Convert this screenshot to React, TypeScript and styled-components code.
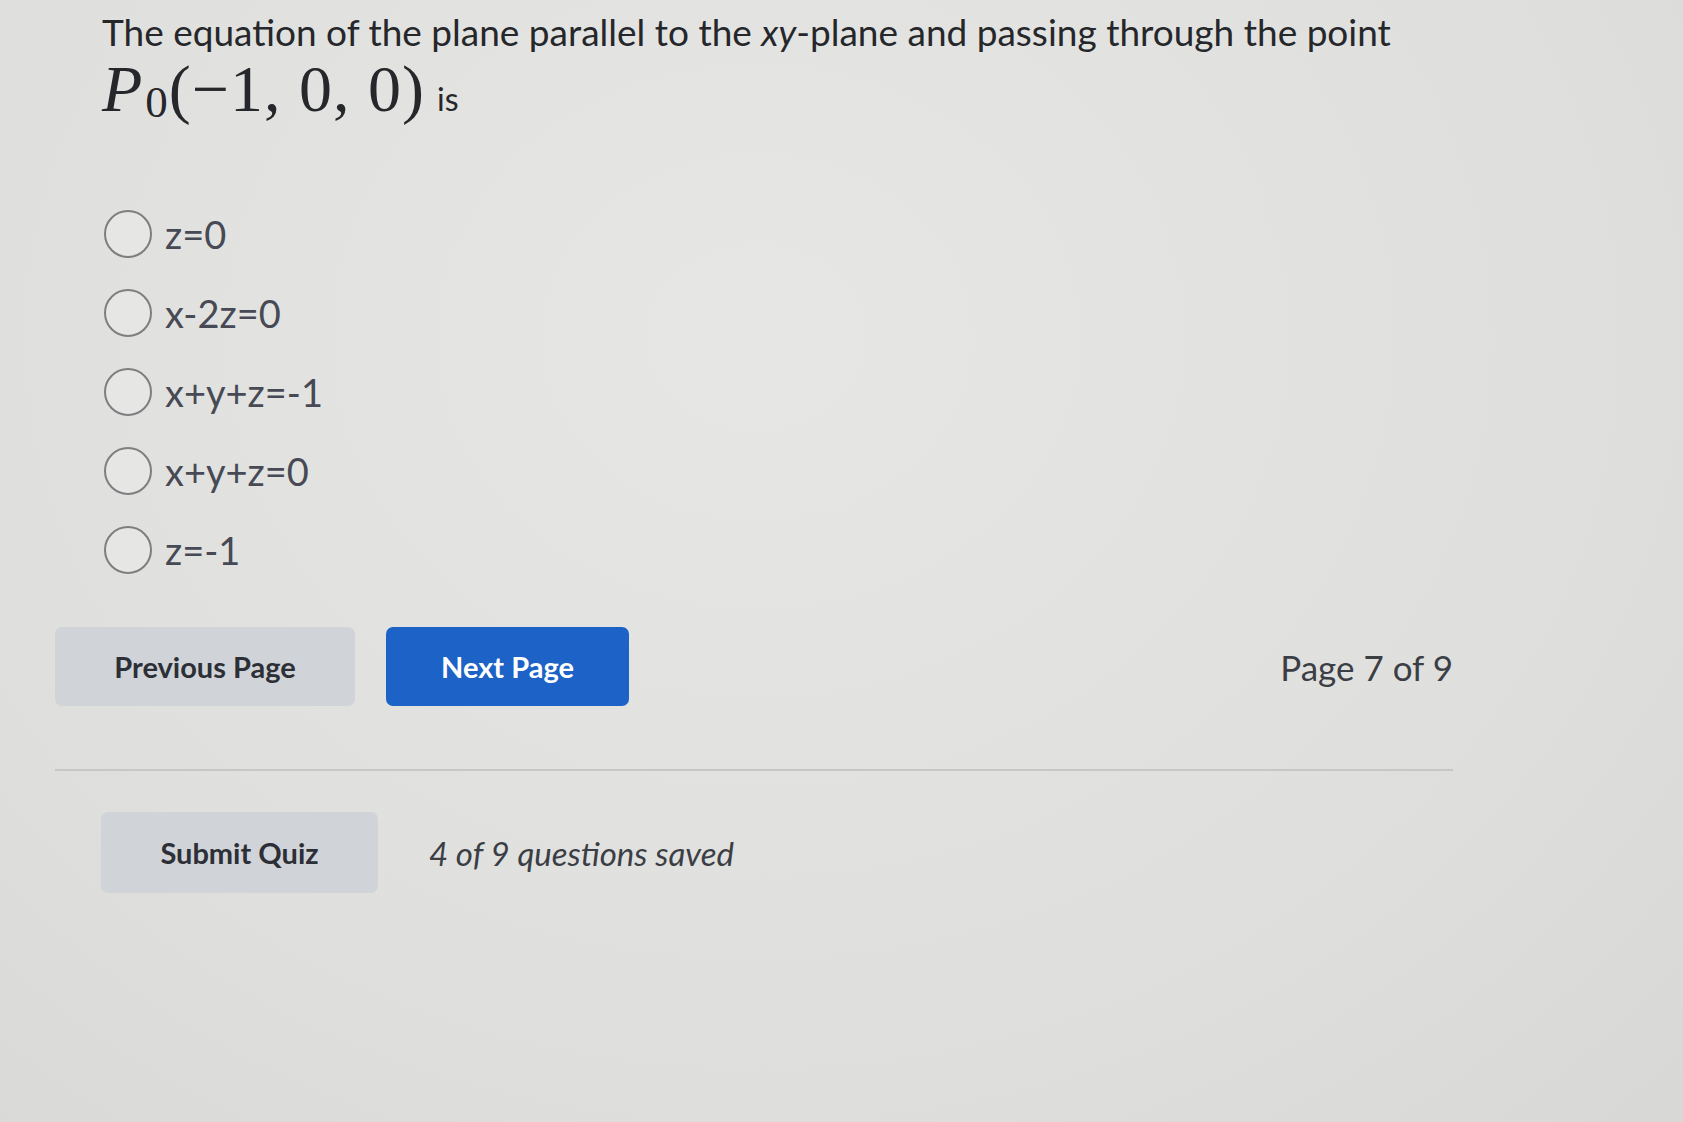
import styled, { createGlobalStyle } from "styled-components";

const Global = createGlobalStyle`
  html, body {
    margin: 0;
    padding: 0;
  }
  body {
    background: radial-gradient(ellipse at 45% 30%, #e6e7e4 0%, #e0e1de 55%, #d8d9d6 100%);
    min-height: 1122px;
    font-family: Lato, "Noto Sans", sans-serif;
  }
`;

const Page = styled.div`
  width: 1398px;
  padding: 0 0 0 55px;
  display: flex;
  flex-direction: column;
`;

const Question = styled.div`
  margin-left: 47px;
  padding-top: 12px;
  color: #26272b;
`;

const QuestionLine = styled.div`
  font-size: 37px;
  line-height: 40px;
  white-space: nowrap;
`;

const MathLine = styled.div`
  display: flex;
  align-items: baseline;
  height: 56px;
  margin-top: 9px;
`;

const Math = styled.span`
  font-family: "Liberation Serif", "DejaVu Serif", serif;
  font-size: 66px;
  line-height: 56px;
  letter-spacing: 1px;
  color: #26272b;
`;

const MathVar = styled.i`
  font-style: italic;
`;

const Sub = styled.span`
  font-size: 45px;
  vertical-align: -6px;
  margin-left: 2px;
`;

const Tail = styled.span`
  font-size: 32px;
  line-height: 56px;
  margin-left: 12px;
`;

const Options = styled.div`
  margin: 77px 0 0 49px;
  display: flex;
  flex-direction: column;
`;

const Option = styled.label`
  height: 79px;
  display: flex;
  align-items: center;
  gap: 13px;
  font-size: 38px;
  color: #474955;
`;

const Radio = styled.span`
  width: 44px;
  height: 44px;
  border: 2px solid #7d7e80;
  border-radius: 50%;
  background: #e6e7e5;
  flex: none;
`;

const NavRow = styled.div`
  margin-top: 38px;
  display: flex;
  align-items: center;
`;

const Button = styled.button<{ $primary?: boolean; $w: number }>`
  width: ${p => p.$w}px;
  height: 79px;
  border: none;
  border-radius: 7px;
  font-family: Lato, "Noto Sans", sans-serif;
  font-weight: 700;
  font-size: 29px;
  color: ${p => (p.$primary ? "#ffffff" : "#2d2f36")};
  background: ${p => (p.$primary ? "#1c62c7" : "#d0d4d8")};
  flex: none;
`;

const PageCount = styled.span`
  margin-left: auto;
  font-size: 35px;
  color: #3c3e46;
`;

const Rule = styled.hr`
  margin: 63px 0 0 0;
  border: none;
  border-top: 2px solid #c6c7c6;
`;

const SubmitRow = styled.div`
  margin: 41px 0 0 46px;
  display: flex;
  align-items: center;
  gap: 51px;
`;

const Saved = styled.span`
  font-style: italic;
  font-size: 33px;
  color: #3c3e46;
`;

const options = ["z=0", "x-2z=0", "x+y+z=-1", "x+y+z=0", "z=-1"];

export default function App() {
  return (
    <>
      <Global />
      <Page>
        <Question>
          <QuestionLine>
            The equation of the plane parallel to the <i>xy</i>-plane and passing through the point
          </QuestionLine>
          <MathLine>
            <Math>
              <MathVar>P</MathVar>
              <Sub>0</Sub>(−1, 0, 0)
            </Math>
            <Tail>is</Tail>
          </MathLine>
        </Question>
        <Options>
          {options.map(o => (
            <Option key={o}>
              <Radio />
              {o}
            </Option>
          ))}
        </Options>
        <NavRow>
          <Button $w={300}>Previous Page</Button>
          <Button $primary $w={243} style={{ marginLeft: 31 }}>
            Next Page
          </Button>
          <PageCount>Page 7 of 9</PageCount>
        </NavRow>
        <Rule />
        <SubmitRow>
          <Button $w={277} style={{ height: 81 }}>Submit Quiz</Button>
          <Saved>4 of 9 questions saved</Saved>
        </SubmitRow>
      </Page>
    </>
  );
}
